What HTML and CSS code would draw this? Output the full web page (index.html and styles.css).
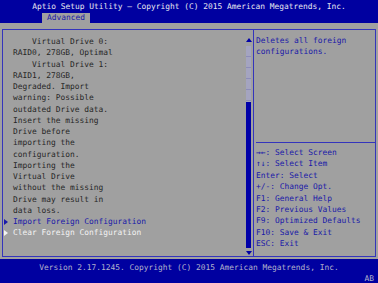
FILE: index.html
```html
<!DOCTYPE html>
<html lang="en">
<head>
    <meta charset="UTF-8">
    <title>Aptio Setup Utility</title>
    <link rel="stylesheet" href="styles.css">
</head>
<body>
    <div class="header">
        <div class="title">Aptio Setup Utility – Copyright (C) 2015 American Megatrends, Inc.</div>
        <div class="tabs">
            <span class="tab">Advanced</span>
        </div>
    </div>

    <div class="frame">
        <div class="leftPane">
            <div class="content">
                <div class="line">    Virtual Drive 0:</div>
                <div class="line">RAID0, 278GB, Optimal</div>
                <div class="line">    Virtual Drive 1:</div>
                <div class="line">RAID1, 278GB,</div>
                <div class="line">Degraded. Import</div>
                <div class="line">warning: Possible</div>
                <div class="line">outdated Drive data.</div>
                <div class="line">Insert the missing</div>
                <div class="line">Drive before</div>
                <div class="line">importing the</div>
                <div class="line">configuration.</div>
                <div class="line">Importing the</div>
                <div class="line">Virtual Drive</div>
                <div class="line">without the missing</div>
                <div class="line">Drive may result in</div>
                <div class="line">data loss.</div>
                <div class="line item">Import Foreign Configuration</div>
                <div class="line item selected">Clear Foreign Configuration</div>
            </div>
            <div class="scrollbar">
                <div class="arrowUp"></div>
                <div class="track">
                    <div class="thumb"></div>
                </div>
                <div class="arrowDown"></div>
            </div>
        </div>

        <div class="rightPane">
            <div class="help">
                <div class="line">Deletes all foreign</div>
                <div class="line">configurations.</div>
            </div>
            <div class="keys">
                <div class="line">→←: Select Screen</div>
                <div class="line">↑↓: Select Item</div>
                <div class="line">Enter: Select</div>
                <div class="line">+/-: Change Opt.</div>
                <div class="line">F1: General Help</div>
                <div class="line">F2: Previous Values</div>
                <div class="line">F9: Optimized Defaults</div>
                <div class="line">F10: Save &amp; Exit</div>
                <div class="line">ESC: Exit</div>
            </div>
        </div>
    </div>

    <div class="footer">
        <div class="version">Version 2.17.1245. Copyright (C) 2015 American Megatrends, Inc.</div>
        <div class="code">AB</div>
    </div>
</body>
</html>
```

FILE: styles.css
```css
body {
    margin: 0;
    width: 378px;
    height: 283px;
    overflow: hidden;
    background-color: #a0a0a0;
    font-family: "DejaVu Sans Mono", "Liberation Mono", monospace;
    font-size: 7.9px;
    display: flex;
    flex-direction: column;
}

.line {
    white-space: pre;
}

/* top bar */
.header {
    height: 23px;
    background-color: #0000a0;
}
.title {
    line-height: 13px;
    text-align: center;
    color: #e8e8f0;
    white-space: pre;
}
.tabs {
    display: flex;
    padding-left: 42px;
}
.tab {
    line-height: 10px;
    padding: 0 5px;
    background-color: #a0a0a0;
    color: #1818a8;
}

/* main frame */
.frame {
    margin: 6px 2px 0 2px;
    height: 228px;
    box-sizing: border-box;
    border: 1px solid #3434bc;
    display: flex;
}

.leftPane {
    width: 250px;
    display: flex;
}
.content {
    flex: 1;
    padding: 6px 0 0 10px;
    line-height: 11.25px;
    color: #262626;
}
.item {
    position: relative;
    color: #1818a8;
}
.item::before {
    content: "";
    position: absolute;
    left: -9px;
    top: 3px;
    border-left: 4px solid #1818a8;
    border-top: 3px solid transparent;
    border-bottom: 3px solid transparent;
}
.selected {
    color: #f4f4f4;
}
.selected::before {
    border-left-color: #f4f4f4;
}

/* scrollbar */
.scrollbar {
    width: 5px;
    margin-right: 2px;
    padding: 8px 0 1px 0;
    display: flex;
    flex-direction: column;
    align-items: center;
}
.arrowUp {
    border-bottom: 4px solid #0000a8;
    border-left: 3px solid transparent;
    border-right: 3px solid transparent;
}
.arrowDown {
    margin-top: 3px;
    border-top: 4px solid #0000a8;
    border-left: 3px solid transparent;
    border-right: 3px solid transparent;
}
.track {
    margin-top: 4px;
    width: 5px;
    flex: 1;
    background-color: #a4a4c0;
    background-image: repeating-linear-gradient(to bottom, transparent 0, transparent 10px, #8c8cb8 10px, #8c8cb8 11px);
    display: flex;
    flex-direction: column;
    justify-content: flex-end;
}
.thumb {
    height: 146px;
    background-color: #0000a8;
}

/* help side */
.rightPane {
    flex: 1;
    border-left: 1px solid #3434bc;
    display: flex;
    flex-direction: column;
    color: #1818a8;
}
.help {
    height: 112px;
    box-sizing: border-box;
    padding: 5px 0 0 2px;
    line-height: 11.25px;
}
.keys {
    margin-left: 2px;
    border-top: 1px solid #3434bc;
    padding-top: 4px;
    line-height: 11.4px;
}

/* bottom bar */
.footer {
    margin-top: 2px;
    flex: 1;
    background-color: #0000a0;
    color: #b4b4cc;
    padding-top: 3px;
}
.version {
    line-height: 12px;
    text-align: center;
    white-space: pre;
}
.code {
    line-height: 9px;
    text-align: right;
    padding-right: 4px;
}
```
